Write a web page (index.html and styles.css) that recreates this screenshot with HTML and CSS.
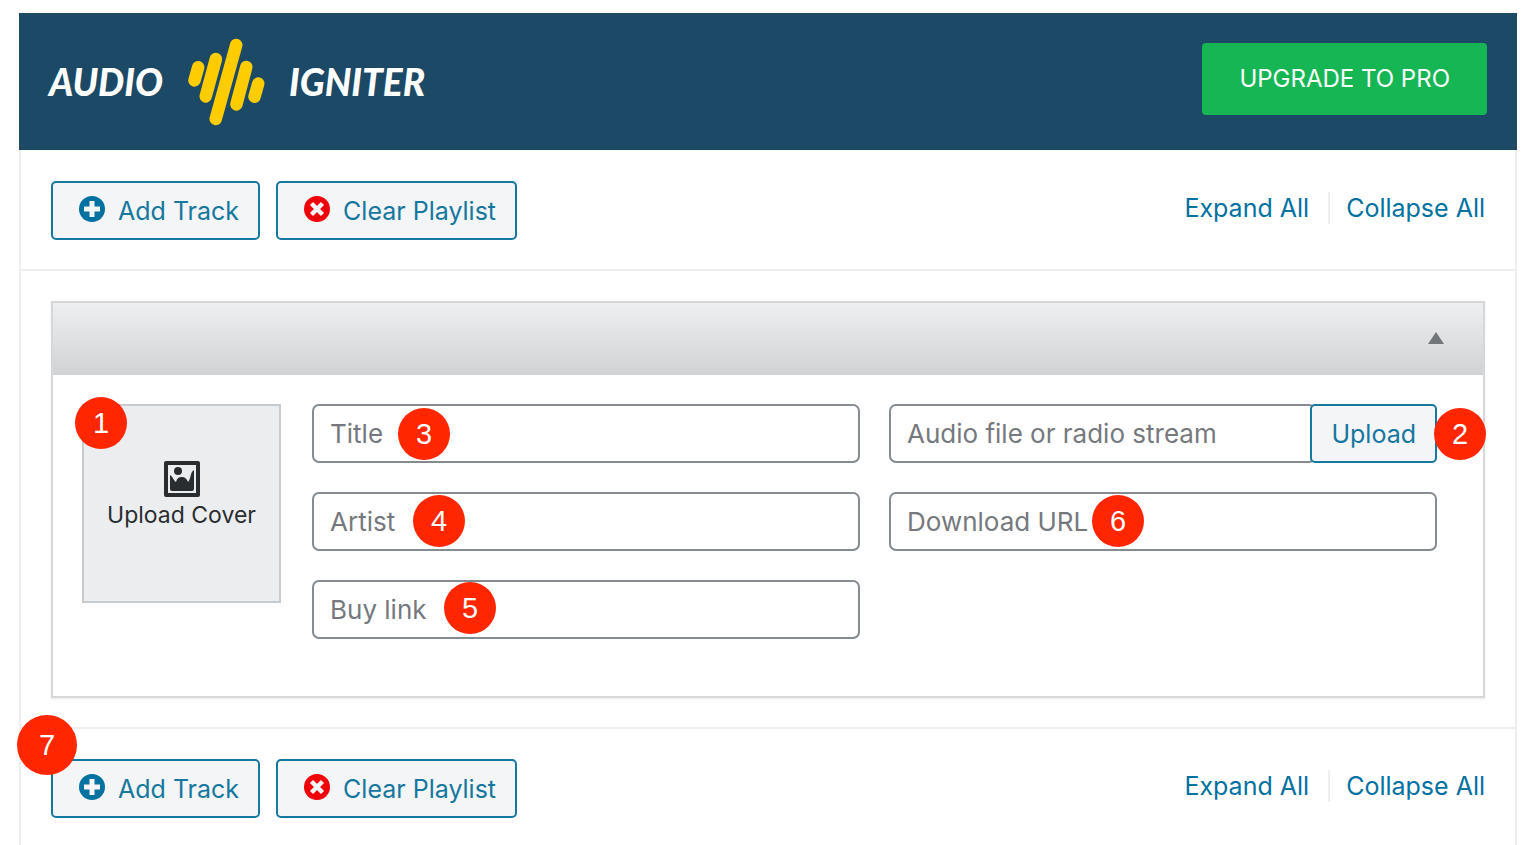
FILE: index.html
```html
<!DOCTYPE html>
<html lang="en">
<head>
  <meta charset="UTF-8">
  <meta name="viewport" content="width=device-width, initial-scale=1.0">
  <title>AudioIgniter - Edit Playlist</title>
  <link rel="stylesheet" href="styles.css">
</head>
<body>
  <!-- Shared icons -->
  <svg class="sprite" width="0" height="0" aria-hidden="true">
    <symbol id="icon-plus" viewBox="0 0 26 26">
      <circle cx="13" cy="13" r="13" fill="#0071a1"/>
      <path d="M13 5v16M5 13h16" stroke="#f3f5f6" stroke-width="5"/>
    </symbol>
    <symbol id="icon-remove" viewBox="0 0 26 26">
      <circle cx="13" cy="13" r="13" fill="#f00008"/>
      <path d="M7.500 7.500l11 11M18.500 7.500l-11 11" stroke="#f3f5f6" stroke-width="4.500"/>
    </symbol>
  </svg>

  <div class="container">
    <header class="header">
      <div class="logo">
        <span>AUDIO</span>
        <svg class="logo-mark" viewBox="0 0 78 88" aria-hidden="true">
          <g stroke="#ffcc00" stroke-width="12.500" stroke-linecap="round">
            <path d="M11.200 29.300L7.500 42.400"/>
            <path d="M28.900 21L18.700 58.400"/>
            <path d="M49.200 7L28.700 81"/>
            <path d="M59.300 29L49.400 66.400"/>
            <path d="M71.200 45.600L67.500 58.700"/>
          </g>
        </svg>
        <span>IGNITER</span>
      </div>
      <a href="#" class="btn-upgrade">UPGRADE TO PRO</a>
    </header>

    <div class="toolbar">
      <div class="toolbar-buttons">
        <button type="button" class="btn btn-icon"><svg class="icon" aria-hidden="true"><use href="#icon-plus"/></svg>Add Track</button>
        <button type="button" class="btn btn-icon"><svg class="icon" aria-hidden="true"><use href="#icon-remove"/></svg>Clear Playlist</button>
      </div>
      <div class="toolbar-links">
        <a href="#">Expand All</a>
        <a href="#">Collapse All</a>
      </div>
    </div>

    <!-- Tracks -->
    <main class="tracks">
      <section class="track">
        <div class="track-header">
          <button type="button" class="track-toggle" aria-label="Toggle track"></button>
        </div>
        <div class="track-body">
          <div class="cover-wrap">
            <button type="button" class="cover">
              <svg class="cover-icon" viewBox="0 0 36 36" aria-hidden="true">
                <path d="M2 0h32a2 2 0 0 1 2 2v32a2 2 0 0 1-2 2H2a2 2 0 0 1-2-2V2a2 2 0 0 1 2-2zM4 4v28h28V4z" fill="#2a2d30" fill-rule="evenodd"/>
                <circle cx="14" cy="10" r="4" fill="#2a2d30"/>
                <path d="M6 14c3 2 4 6 6 7 1-4 3-5 6-5s5 2 6 5c3-3 2-10 6-12v19a2 2 0 0 1-2 2H8a2 2 0 0 1-2-2z" fill="#2a2d30"/>
              </svg>
              Upload Cover
            </button>
            <span class="badge badge-cover">1</span>
          </div>

          <form class="fields">
            <div class="field">
              <input type="text" placeholder="Title" aria-label="Title">
              <span class="badge badge-title">3</span>
            </div>
            <div class="field">
              <input type="text" placeholder="Audio file or radio stream" aria-label="Audio file or radio stream">
              <button type="button" class="btn btn-upload">Upload</button>
              <span class="badge badge-upload">2</span>
            </div>
            <div class="field">
              <input type="text" placeholder="Artist" aria-label="Artist">
              <span class="badge badge-artist">4</span>
            </div>
            <div class="field">
              <input type="text" placeholder="Download URL" aria-label="Download URL">
              <span class="badge badge-download">6</span>
            </div>
            <div class="field">
              <input type="text" placeholder="Buy link" aria-label="Buy link">
              <span class="badge badge-buy">5</span>
            </div>
          </form>
        </div>
      </section>
    </main>

    <div class="toolbar toolbar-bottom">
      <div class="toolbar-buttons">
        <button type="button" class="btn btn-icon"><svg class="icon" aria-hidden="true"><use href="#icon-plus"/></svg>Add Track</button>
        <button type="button" class="btn btn-icon"><svg class="icon" aria-hidden="true"><use href="#icon-remove"/></svg>Clear Playlist</button>
        <span class="badge badge-add">7</span>
      </div>
      <div class="toolbar-links">
        <a href="#">Expand All</a>
        <a href="#">Collapse All</a>
      </div>
    </div>
  </div>
</body>
</html>
```
FILE: styles.css
```css
* {
  box-sizing: border-box;
}

body {
  margin: 0;
  padding: 13px 19px 0;
  background: #fff;
  color: #2a2d30;
  font-family: Inter, "Liberation Sans", sans-serif;
  font-size: 25px;
}

a {
  color: #0071a1;
  text-decoration: none;
}

button,
input {
  font-family: inherit;
}

.sprite {
  display: block;
}

.container {
  border: 1px solid #eeeeef;
  border-width: 0 2px;
}

/* Header */
.header {
  display: flex;
  align-items: center;
  justify-content: space-between;
  height: 137px;
  margin: 0 -2px;
  padding: 0 30px;
  background: #1c4966;
}

.logo {
  display: flex;
  align-items: center;
  gap: 24px;
  color: #fff;
  font-family: Lato, sans-serif;
  font-size: 37px;
  font-style: italic;
  font-weight: 900;
}

.logo-mark {
  width: 78px;
  height: 88px;
}

.btn-upgrade {
  padding: 0 37px;
  margin-bottom: 6px;
  border-radius: 4px;
  background: #16b655;
  color: #fff;
  font-size: 24px;
  line-height: 72px;
}

/* Toolbars */
.toolbar {
  display: flex;
  align-items: flex-start;
  justify-content: space-between;
  padding: 31px 30px 29px;
  border-bottom: 2px solid #eeeeef;
}

.toolbar-bottom {
  padding: 30px 30px 27px;
  border-top: 2px solid #eeeeef;
  border-bottom: 0;
}

.toolbar-buttons {
  display: flex;
  gap: 16px;
  position: relative;
}

.toolbar-links {
  display: flex;
  padding-top: 11px;
  line-height: 32px;
}

.toolbar-links a + a {
  margin-left: 19px;
  padding-left: 16px;
  border-left: 2px solid #eeeeef;
}

.btn {
  height: 59px;
  padding: 0 19px;
  border: 2px solid #16779f;
  border-radius: 5px;
  background: #f3f5f6;
  color: #16779f;
  font-size: 25px;
  cursor: pointer;
}

.btn-icon {
  display: flex;
  align-items: center;
  gap: 13px;
  padding: 0 19px 0 26px;
}

.icon {
  width: 26px;
  height: 26px;
  margin-bottom: 4px;
}

/* Track */
.tracks {
  padding: 30px 30px 29px;
}

.track {
  border: 2px solid #d5d7d9;
  box-shadow: 0 1px 2px rgba(0, 0, 0, 0.08);
}

.track-header {
  display: flex;
  align-items: center;
  justify-content: flex-end;
  height: 72px;
  padding: 0 39px;
  border-bottom: 2px solid #cfd1d3;
  background: linear-gradient(#eeeff1, #d2d3d5);
}

.track-toggle {
  width: 16px;
  height: 12px;
  padding: 0;
  border: 0;
  background: #72777c;
  clip-path: polygon(50% 0, 100% 100%, 0 100%);
  cursor: pointer;
}

.track-body {
  display: flex;
  gap: 31px;
  padding: 29px 46px 57px 29px;
}

.cover-wrap {
  position: relative;
}

.cover {
  display: flex;
  flex-direction: column;
  align-items: center;
  justify-content: center;
  gap: 4px;
  width: 199px;
  height: 199px;
  padding: 0 0 18px;
  border: 2px solid #c8cbce;
  background: #ecedef;
  color: #2a2d30;
  font-size: 23px;
  line-height: 28px;
  cursor: pointer;
}

.cover-icon {
  width: 36px;
  height: 36px;
}

.fields {
  flex: 1;
  display: grid;
  grid-template-columns: repeat(2, minmax(0, 1fr));
  gap: 29px;
}

.field {
  display: flex;
  position: relative;
}

.field input {
  flex: 1;
  min-width: 0;
  height: 59px;
  padding: 0 16px;
  border: 2px solid #858b91;
  border-radius: 7px;
  background: #fff;
  color: #2a2d30;
  font-size: 26px;
}

.field input::placeholder {
  color: #75797d;
}

.btn-upload {
  margin-left: -6px;
  position: relative;
}

/* Numbered badges */
.badge {
  position: absolute;
  width: 52px;
  height: 52px;
  border-radius: 50%;
  background: #ff2600;
  color: #fff;
  font-family: "Liberation Sans", Arial, sans-serif;
  font-size: 29px;
  line-height: 52px;
  text-align: center;
}

.badge-cover {
  top: -7px;
  left: -7px;
}

.badge-title {
  top: 4px;
  left: 86px;
}

.badge-upload {
  top: 4px;
  right: -49px;
}

.badge-artist {
  top: 3px;
  left: 101px;
}

.badge-download {
  top: 3px;
  left: 203px;
}

.badge-buy {
  top: 2px;
  left: 132px;
}

.badge-add {
  top: -44px;
  left: -34px;
  width: 60px;
  height: 60px;
  line-height: 60px;
}
```
